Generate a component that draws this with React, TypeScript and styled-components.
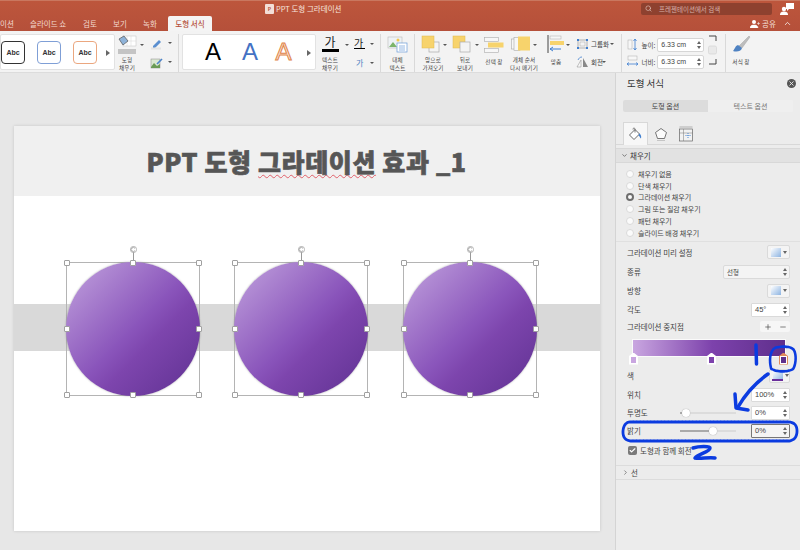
import React from 'react';
import styled, { createGlobalStyle } from 'styled-components';
import { Search, ChevronUp, ChevronDown, ChevronRight, Check, X, Plus, Minus } from 'lucide-react';

const GlobalStyle = createGlobalStyle`
  html, body { margin: 0; padding: 0; overflow: hidden; }
  body { font-family: "Noto Sans CJK KR", "Noto Sans", sans-serif; color: #333; }
  * { box-sizing: border-box; }
`;

const Window = styled.div`
  position: relative;
  width: 800px;
  height: 550px;
  display: flex;
  flex-direction: column;
  overflow: hidden;
  background: #e7e7e7;
`;

const TitleBar = styled.header`
  height: 31px;
  background: linear-gradient(#bd563c, #b5503a);
  border-top: 1px solid #c9775f;
  color: #fff;
  display: flex;
  flex-direction: column;
`;
const TopRow = styled.div`
  height: 15px;
  display: flex;
  align-items: center;
`;
const DocTitle = styled.div`
  margin-left: 265px;
  width: 376px;
  display: flex;
  align-items: center;
  gap: 2px;
  font-size: 7.5px;
  color: #f6e4de;
`;
const DocIcon = styled.span`
  width: 9px;
  height: 10px;
  background: #f3ded7;
  border-radius: 1px;
  color: #b5503a;
  font-size: 5px;
  font-weight: 700;
  text-align: center;
  line-height: 10px;
`;
const SearchBox = styled.div`
  width: 131px;
  height: 12px;
  background: #8e412f;
  border-radius: 2px;
  display: flex;
  align-items: center;
  gap: 7px;
  padding-left: 4px;
  font-size: 6.5px;
  color: #d8b2a7;
`;
const ProfileIcon = styled.svg`
  margin-left: 8px;
`;
const TabRow = styled.div`
  height: 15px;
  display: flex;
  align-items: flex-end;
  position: relative;
`;
const Tab = styled.div<{ $w: number; $active?: boolean }>`
  width: ${p => p.$w}px;
  height: 15px;
  font-size: 7.5px;
  line-height: 15px;
  text-align: ${p => (p.$active ? 'center' : 'left')};
  color: ${p => (p.$active ? '#b5503a' : '#f3d9d0')};
  background: ${p => (p.$active ? '#f4f4f4' : 'transparent')};
  border-radius: 2px 2px 0 0;
  font-weight: ${p => (p.$active ? 500 : 400)};
`;
const ShareArea = styled.div`
  margin-left: auto;
  width: 50px;
  height: 15px;
  display: flex;
  align-items: center;
  font-size: 7.5px;
  color: #f6e4de;
  gap: 1px;
  margin-top: -2px;
`;

const Ribbon = styled.div`
  height: 42px;
  background: #f3f3f3;
  border-bottom: 1px solid #dcdcdc;
  display: flex;
  padding-top: 3px;
`;
const Gallery = styled.div<{ $w: number }>`
  width: ${p => p.$w}px;
  height: 36px;
  flex: none;
  background: #fff;
  border: 1px solid #e2e2e2;
  border-radius: 2px;
  display: flex;
  align-items: center;
  position: relative;
`;
const AbcButton = styled.div<{ $color: string }>`
  width: 24px;
  height: 23px;
  margin-right: 12px;
  border: 1px solid ${p => p.$color};
  border-radius: 4px;
  font-size: 7px;
  font-family: "Liberation Sans", sans-serif;
  font-weight: 700;
  color: #333;
  display: flex;
  align-items: center;
  justify-content: center;
`;
const BigA = styled.div<{ $color: string; $stroke?: string; $w?: number; $ml?: number }>`
  width: ${p => p.$w ?? 37}px;
  margin-left: ${p => p.$ml ?? 0}px;
  text-align: center;
  font-family: "Liberation Sans", sans-serif;
  font-size: 24px;
  line-height: 36px;
  color: ${p => p.$color};
  -webkit-text-stroke: ${p => (p.$stroke ? `1px ${p.$stroke}` : '0')};
`;
const MoreArrow = styled.span`
  width: 0;
  height: 0;
  border-left: 4px solid #666;
  border-top: 3px solid transparent;
  border-bottom: 3px solid transparent;
  position: absolute;
  right: 4px;
  top: 15px;
`;
const Divider = styled.div<{ $l: number; $r: number }>`
  width: 1px;
  height: 38px;
  background: #d9d9d9;
  margin: 0 ${p => p.$r}px 0 ${p => p.$l}px;
  flex: none;
`;
const Tool = styled.div<{ $w: number }>`
  width: ${p => p.$w}px;
  height: 38px;
  flex: none;
  display: flex;
  flex-direction: column;
  align-items: center;
  position: relative;
`;
const ToolIcon = styled.div<{ $pr?: number }>`
  height: 21px;
  padding-right: ${p => p.$pr ?? 0}px;
  display: flex;
  align-items: center;
  justify-content: center;
`;
const TextFillIcon = styled(ToolIcon)`
  flex-direction: column;
  gap: 1px;
`;
const ToolLabel = styled.div<{ $single?: boolean; $pr?: number }>`
  font-size: 5.6px;
  line-height: 8.2px;
  letter-spacing: 0.15px;
  text-align: center;
  color: #444;
  white-space: nowrap;
  padding-right: ${p => p.$pr ?? 0}px;
  margin-top: ${p => (p.$single ? 3 : 1)}px;
`;
const Caret = styled.span<{ $right?: number; $top?: number }>`
  position: absolute;
  right: ${p => p.$right ?? 0}px;
  top: ${p => p.$top ?? 11}px;
  width: 0;
  height: 0;
  border-top: 2.5px solid #555;
  border-left: 2px solid transparent;
  border-right: 2px solid transparent;
`;
const StackTool = styled.div<{ $w: number; $gap?: number; $pl?: number }>`
  width: ${p => p.$w}px;
  height: 38px;
  flex: none;
  padding-left: ${p => p.$pl ?? 0}px;
  display: flex;
  flex-direction: column;
  justify-content: center;
  gap: ${p => p.$gap ?? 5}px;
`;
const MiniRow = styled.div`
  height: 13px;
  display: flex;
  align-items: center;
  gap: 2px;
  font-size: 6.5px;
  color: #444;
  position: relative;
`;
const GaRow = styled(MiniRow)`
  flex-direction: column;
  align-items: flex-start;
  gap: 0;
`;
const BlueGa = styled(MiniRow)`
  padding-left: 2px;
  color: #4f82c2;
  font-size: 8px;
`;
const SizeInput = styled.div`
  width: 47px;
  height: 14px;
  background: #fff;
  border: 1px solid #d6d6d6;
  border-radius: 2px;
  font-size: 7px;
  font-family: "Liberation Sans", sans-serif;
  display: flex;
  align-items: center;
  padding-left: 3px;
  position: relative;
`;
const TextBar = styled.div<{ $w: number; $h: number }>`
  width: ${p => p.$w}px;
  height: ${p => p.$h}px;
  background: #000;
`;
const GaGlyph = styled.div<{ $size: number }>`
  font-size: ${p => p.$size}px;
  line-height: ${p => p.$size}px;
  color: #222;
  text-align: center;
`;

const Body = styled.div`
  flex: 1;
  display: flex;
  min-height: 0;
`;
const Workspace = styled.main`
  width: 615px;
  padding: 53px 15px 0 14px;
  background: #e7e7e7;
`;
const Slide = styled.section`
  position: relative;
  width: 586px;
  height: 405px;
  background: #fff;
  box-shadow: 0 0 3px rgba(0, 0, 0, 0.15);
`;
const SlideHeader = styled.div`
  height: 70px;
  background: #f0f0f0;
  display: flex;
  align-items: center;
  justify-content: center;
  padding-right: 1px;
`;
const SlideTitle = styled.h1`
  margin: 0;
  font-size: 25px;
  line-height: 30px;
  font-weight: 900;
  color: #565656;
  -webkit-text-stroke: 0.7px #565656;
  letter-spacing: 0.6px;
  white-space: nowrap;
`;
const Squiggle = styled.span`
  text-decoration: underline wavy #e0606a 1px;
  text-underline-offset: 2px;
`;
const Band = styled.div`
  position: absolute;
  left: 0;
  right: 0;
  top: 178px;
  height: 47px;
  background: #d9d9d9;
`;
const ShapeBox = styled.div<{ $x: number }>`
  position: absolute;
  left: ${p => p.$x}px;
  top: 136px;
  width: 134px;
  height: 134px;
  border: 1px solid #b4b4b4;
`;
const Circle = styled.div`
  position: absolute;
  inset: -1px;
  border-radius: 50%;
  background: linear-gradient(135deg, #b591d6 12%, #8a55bb 50%, #7d45ad 62%, #653597 92%);
  box-shadow: 0 0 2px rgba(60, 60, 60, 0.45);
`;
const Handle = styled.span<{ $l: number; $t: number }>`
  position: absolute;
  left: calc(${p => p.$l}% - 3px);
  top: calc(${p => p.$t}% - 3px);
  width: 6px;
  height: 6px;
  background: #fff;
  border: 1px solid #a0a0a0;
  border-radius: 1px;
`;
const RotateStem = styled.span`
  position: absolute;
  left: 50%;
  top: -11px;
  width: 1px;
  height: 11px;
  background: #999;
`;
const RotateKnob = styled.svg`
  position: absolute;
  left: calc(50% - 3px);
  top: -17px;
`;

const Panel = styled.aside`
  width: 185px;
  background: #ececec;
  border-left: 1px solid #d4d4d4;
  display: flex;
  flex-direction: column;
  font-size: 7.5px;
  color: #444;
`;
const PanelHeader = styled.div`
  height: 20px;
  padding: 0 4px 0 11px;
  display: flex;
  align-items: center;
  justify-content: space-between;
  font-size: 9.5px;
  color: #333;
`;
const CloseDot = styled.span`
  width: 9px;
  height: 9px;
  border-radius: 50%;
  background: #555;
  color: #ececec;
  display: flex;
  align-items: center;
  justify-content: center;
`;
const Segment = styled.div`
  margin: 7px 7px 0;
  height: 12px;
  display: flex;
  border-radius: 2px;
  overflow: hidden;
  background: #efefef;
`;
const SegmentItem = styled.div<{ $active?: boolean }>`
  flex: 1;
  background: ${p => (p.$active ? '#dcdcdc' : '#efefef')};
  color: ${p => (p.$active ? '#444' : '#777')};
  font-size: 7px;
  line-height: 12px;
  text-align: center;
`;
const IconTabs = styled.div`
  margin-top: 10px;
  height: 23px;
  padding-left: 7px;
  display: flex;
  border-bottom: 1px solid #d8d8d8;
`;
const IconTab = styled.div<{ $active?: boolean }>`
  width: 25px;
  height: 23px;
  display: flex;
  align-items: center;
  justify-content: center;
  background: ${p => (p.$active ? '#f7f7f7' : 'transparent')};
  border: 1px solid ${p => (p.$active ? '#d8d8d8' : 'transparent')};
  border-bottom: none;
`;
const SectionHead = styled.div`
  margin-top: 3px;
  height: 15px;
  background: #e2e2e2;
  border-top: 1px solid #d8d8d8;
  border-bottom: 1px solid #d8d8d8;
  display: flex;
  align-items: center;
  gap: 2px;
  padding-left: 5px;
  font-size: 7.5px;
  color: #333;
`;
const RadioList = styled.div`
  padding: 5px 0 0 10px;
  display: flex;
  flex-direction: column;
  height: 79px;
  border-bottom: 1px solid #e0e0e0;
`;
const RadioRow = styled.div`
  height: 11.8px;
  display: flex;
  align-items: center;
  gap: 4px;
  font-size: 7px;
  color: #444;
`;
const Radio = styled.span<{ $on?: boolean }>`
  width: 8px;
  height: 8px;
  border-radius: 50%;
  background: #fbfbfb;
  border: ${p => (p.$on ? '2.5px solid #6e6e6e' : '1px solid #dadada')};
`;
const FormRow = styled.div<{ $h: number }>`
  height: ${p => p.$h}px;
  padding: 0 10px 0 11px;
  display: flex;
  align-items: center;
  justify-content: space-between;
  flex: none;
  font-size: 7.5px;
`;
const ColorFormRow = styled(FormRow)`
  margin-top: 1px;
`;
const Swatch = styled.div`
  width: 23px;
  height: 14px;
  background: #f4f4f4;
  border: 1px solid #dadada;
  border-radius: 2px;
  display: flex;
  align-items: center;
  gap: 2px;
  padding-left: 3px;
`;
const SwatchFill = styled.span`
  width: 10px;
  height: 9px;
  background: linear-gradient(135deg, #fff, #8db4e2);
`;
const SelectBox = styled.div`
  width: 67px;
  height: 14px;
  background: #f4f4f4;
  border: 1px solid #dadada;
  border-radius: 2px;
  font-size: 6.5px;
  padding-left: 3px;
  line-height: 12px;
  position: relative;
`;
const SpinBox = styled.div<{ $focus?: boolean }>`
  width: 39px;
  height: 14px;
  background: ${p => (p.$focus ? '#f4f4f4' : '#fff')};
  border: ${p => (p.$focus ? '1.5px solid #777' : '1px solid #dadada')};
  border-radius: 1px;
  font-size: 7.5px;
  line-height: 12px;
  padding-left: 3px;
  position: relative;
  font-family: "Liberation Sans", sans-serif;
  flex: none;
`;
const Spinner = styled.span`
  position: absolute;
  right: 2px;
  top: 2px;
  bottom: 2px;
  width: 5px;
  display: flex;
  flex-direction: column;
  justify-content: space-between;
  align-items: center;
`;
const SpinUp = styled.i`
  width: 0;
  height: 0;
  border-bottom: 3px solid #666;
  border-left: 2px solid transparent;
  border-right: 2px solid transparent;
`;
const SpinDown = styled.i`
  width: 0;
  height: 0;
  border-top: 3px solid #666;
  border-left: 2px solid transparent;
  border-right: 2px solid transparent;
`;
const PlusMinus = styled.div`
  width: 30px;
  height: 11px;
  background: #f6f6f6;
  border-radius: 2px;
  display: flex;
  align-items: center;
  justify-content: space-around;
  color: #444;
`;
const StopArea = styled.div`
  position: relative;
  height: 26px;
  margin: 4.5px 14px 0 16px;
  flex: none;
`;
const GradientBar = styled.div`
  height: 18px;
  background: linear-gradient(90deg, #c9a6e0 0%, #7d42ac 52%, #5f2f8c 100%);
  border: 1px solid #fafafa;
`;
const Stop = styled.span<{ $pos: number; $color: string; $sel?: boolean }>`
  position: absolute;
  left: ${p => p.$pos}px;
  top: 14px;
  width: 9px;
  height: 12px;
  background: ${p => (p.$sel ? '#e08a5a' : '#fff')};
  clip-path: polygon(50% 0, 100% 30%, 100% 100%, 0 100%, 0 30%);
  &::after {
    content: '';
    position: absolute;
    left: 1px;
    right: 1px;
    top: 3px;
    bottom: 1px;
    background: ${p => p.$color};
    border: 0.5px solid #fff;
  }
`;
const ColorButton = styled(Swatch)`
  width: 21px;
  position: relative;
`;
const ColorLine = styled.span`
  position: absolute;
  left: 2px;
  bottom: 1px;
  width: 11px;
  height: 2px;
  background: #6b2f9c;
`;
const SliderGroup = styled.div`
  display: flex;
  align-items: center;
  gap: 15px;
`;
const Track = styled.div<{ $fill: number }>`
  position: relative;
  width: 56px;
  height: 2px;
  background: linear-gradient(90deg, #aaa ${p => p.$fill}%, #dcdcdc ${p => p.$fill}%);
`;
const Knob = styled.span<{ $fill: number }>`
  position: absolute;
  left: ${p => p.$fill}%;
  top: -3px;
  width: 8px;
  height: 8px;
  border-radius: 50%;
  background: #fff;
  box-shadow: 0 0 1px #888;
`;
const CheckRow = styled.div`
  height: 26px;
  flex: none;
  padding: 0 0 4px 12px;
  display: flex;
  align-items: center;
  gap: 3px;
  font-size: 7.5px;
  border-bottom: 1px solid #dcdcdc;
`;
const CheckBox = styled.span`
  width: 9px;
  height: 9px;
  background: #7a7a7a;
  border-radius: 2px;
  color: #fff;
  display: flex;
  align-items: center;
  justify-content: center;
`;
const LineSection = styled.div`
  height: 14px;
  flex: none;
  display: flex;
  align-items: center;
  gap: 2px;
  padding-left: 6px;
  font-size: 7.5px;
  border-bottom: 1px solid #dcdcdc;
`;
const Scribbles = styled.svg`
  position: absolute;
  left: 0;
  top: 0;
  pointer-events: none;
`;

const SpinControls = () => (
  <Spinner>
    <SpinUp />
    <SpinDown />
  </Spinner>
);

const FillIcon = () => (
  <svg width="20" height="21" viewBox="0 0 20 21">
    <rect x="6" y="2" width="13" height="10" fill="#fff" stroke="#c9c9c9" strokeWidth="0.6" />
    <path d="M10 2v10M14 2v10M6 7h13" stroke="#d5d5d5" strokeWidth="0.5" />
    <path d="M2 5l5-3 4 5-5 4z" fill="#8fb3d9" stroke="#555" strokeWidth="0.7" />
    <rect x="1" y="15" width="18" height="5" fill="#c4c4c4" />
  </svg>
);
const PenIcon = () => (
  <svg width="13" height="12" viewBox="0 0 13 12">
    <path d="M3 8l6-6 2 2-6 6H3z" fill="#5b8fd0" />
    <rect x="1" y="9.5" width="10" height="2" fill="#e4e4e4" />
  </svg>
);
const EffectIcon = () => (
  <svg width="13" height="12" viewBox="0 0 13 12">
    <rect x="1" y="2" width="9" height="9" fill="#dbe8d2" stroke="#888" strokeWidth="0.5" />
    <path d="M1 10l3-4 3 3 3-2v4H1z" fill="#6a9a55" />
    <path d="M7 7l5-5" stroke="#4b82c8" strokeWidth="1.6" />
  </svg>
);
const AltIcon = () => (
  <svg width="21" height="18" viewBox="0 0 21 18">
    <rect x="1" y="2" width="14" height="11" fill="#eef2f5" stroke="#bbb" strokeWidth="0.6" />
    <path d="M2 12l4-5 4 5z" fill="#7cb46a" />
    <circle cx="11" cy="5" r="1.5" fill="#f2c94c" />
    <rect x="10" y="8" width="10" height="9" fill="#fff" stroke="#6a9bd8" strokeWidth="0.7" />
    <path d="M12 11h6M12 13h6M12 15h6" stroke="#6a9bd8" strokeWidth="0.7" />
  </svg>
);
const LayerIcon = ({ back }: { back?: boolean }) => (
  <svg width="20" height="18" viewBox="0 0 20 18">
    {back ? (
      <>
        <rect x="1" y="1" width="12" height="12" fill="#f7d36c" stroke="#e0b94e" strokeWidth="0.5" />
        <rect x="8" y="7" width="10" height="10" fill="#f4f4f4" stroke="#aaa" strokeWidth="0.7" />
      </>
    ) : (
      <>
        <rect x="8" y="7" width="10" height="10" fill="#f4f4f4" stroke="#aaa" strokeWidth="0.7" />
        <rect x="1" y="1" width="12" height="12" fill="#f7d36c" stroke="#e0b94e" strokeWidth="0.5" />
      </>
    )}
  </svg>
);
const PaneIcon = () => (
  <svg width="20" height="16" viewBox="0 0 20 16">
    <rect x="0.5" y="0.5" width="14" height="4" fill="#f7f7f7" stroke="#aaa" strokeWidth="0.6" />
    <rect x="4" y="5.5" width="15.5" height="5" fill="#f7d36c" />
    <rect x="0.5" y="11.5" width="14" height="4" fill="#f7f7f7" stroke="#aaa" strokeWidth="0.6" />
  </svg>
);
const ReorderIcon = () => (
  <svg width="20" height="16" viewBox="0 0 20 16">
    <rect x="0.5" y="3" width="6" height="10" fill="#f7f7f7" stroke="#aaa" strokeWidth="0.6" />
    <rect x="3" y="1.5" width="6" height="13" fill="#f7f7f7" stroke="#aaa" strokeWidth="0.6" />
    <rect x="7" y="0.5" width="12" height="14" fill="#f7d36c" />
  </svg>
);
const AlignIcon = () => (
  <svg width="18" height="19" viewBox="0 0 18 19">
    <path d="M1 0v18" stroke="#444" strokeWidth="1" />
    <rect x="3" y="1" width="11" height="3" fill="#f7f7f7" stroke="#aaa" strokeWidth="0.5" />
    <rect x="3" y="6" width="14" height="4" fill="#f7d36c" />
    <path d="M3 14h11M3 14l3-2M3 14l3 2" stroke="#3f7fd0" strokeWidth="1" fill="none" />
  </svg>
);
const GroupIcon = () => (
  <svg width="13" height="12" viewBox="0 0 13 12">
    <rect x="2" y="2" width="9" height="8" fill="none" stroke="#888" strokeWidth="0.6" />
    <path d="M4 4h5v4H4z" fill="#f4f4f4" stroke="#aaa" strokeWidth="0.5" />
    <path d="M1 1h2v2H1zM10 1h2v2h-2zM1 9h2v2H1zM10 9h2v2h-2z" fill="#3f7fd0" />
  </svg>
);
const RotateIcon = () => (
  <svg width="13" height="12" viewBox="0 0 13 12">
    <path d="M7 11V2l5 9z" fill="#888" />
    <path d="M1 11l4-7v7z" fill="#f7f7f7" stroke="#888" strokeWidth="0.5" />
    <path d="M2 4c1-2 2-3 4-3" stroke="#3f7fd0" strokeWidth="0.8" fill="none" />
  </svg>
);
const HeightIcon = () => (
  <svg width="11" height="13" viewBox="0 0 11 13">
    <rect x="1" y="2" width="4" height="9" fill="#f7f7f7" stroke="#aaa" strokeWidth="0.5" />
    <path d="M8 1v11M6.5 3L8 1l1.5 2M6.5 10L8 12l1.5-2" stroke="#3f7fd0" strokeWidth="0.8" fill="none" />
  </svg>
);
const WidthIcon = () => (
  <svg width="11" height="13" viewBox="0 0 11 13">
    <rect x="1" y="1" width="9" height="4" fill="#f7f7f7" stroke="#aaa" strokeWidth="0.5" />
    <path d="M0 9h11M2 7.5L0 9l2 1.5M9 7.5L11 9l-2 1.5" stroke="#3f7fd0" strokeWidth="0.8" fill="none" />
  </svg>
);
const LockBracket = () => (
  <svg width="11" height="32" viewBox="0 0 11 32">
    <path d="M2 2h7v5M2 30h7v-5" stroke="#444" strokeWidth="1" fill="none" />
    <rect x="1.5" y="12" width="8" height="8" rx="1.5" fill="#e9e9e9" stroke="#d0d0d0" strokeWidth="0.6" />
  </svg>
);
const BrushIcon = () => (
  <svg width="20" height="19" viewBox="0 0 20 19">
    <path d="M8 11L18 1l1 1-8 11z" fill="#bdbdbd" stroke="#999" strokeWidth="0.4" />
    <path d="M7 10c-3 1-3 4-5 6 3 1 8 1 9-3z" fill="#4f82c2" />
  </svg>
);
const BucketIcon = () => (
  <svg width="15" height="15" viewBox="0 0 15 15">
    <path d="M1.5 8L7 2.5 11.5 7 6 12.5z" fill="#fff" stroke="#444" strokeWidth="0.8" />
    <path d="M5 2.5c0-2 2-2 2 0v3" fill="none" stroke="#444" strokeWidth="0.7" />
    <path d="M11.5 6.5c1.5 1 2 3 1.5 5-1-.5-1-2-2.5-3z" fill="#3f7fd0" />
  </svg>
);
const PentagonIcon = () => (
  <svg width="14" height="15" viewBox="0 0 14 15">
    <path d="M7 1.5l5.5 4-2 6h-7l-2-6z" fill="#fbfbfb" stroke="#555" strokeWidth="0.8" />
    <path d="M3 13.5h8" stroke="#bbb" strokeWidth="0.8" />
  </svg>
);
const SizeTabIcon = () => (
  <svg width="16" height="16" viewBox="0 0 16 16">
    <rect x="1.5" y="3" width="13" height="12" fill="#f2f2f2" stroke="#666" strokeWidth="0.7" />
    <path d="M1.5 1h13M5.5 3v12M1.5 7h13" stroke="#777" strokeWidth="0.5" />
    <path d="M10 7v5M7.5 9.5h5" stroke="#3f7fd0" strokeWidth="0.9" strokeDasharray="1 1" />
  </svg>
);

const handles: [number, number][] = [
  [0, 0], [50, 0], [100, 0], [0, 50], [100, 50], [0, 100], [50, 100], [100, 100],
];

const Shape = ({ x }: { x: number }) => (
  <ShapeBox $x={x}>
    <Circle />
    <RotateStem />
    <RotateKnob width="7" height="7" viewBox="0 0 7 7" fill="none">
      <circle cx="3.5" cy="3.5" r="3.1" fill="#fff" stroke="#8c8c8c" strokeWidth="0.6" />
      <path d="M5 2.4a2 2 0 1 0 0 2.2" stroke="#777" strokeWidth="0.6" />
    </RotateKnob>
    {handles.map(([l, t]) => (
      <Handle key={`${l}-${t}`} $l={l} $t={t} />
    ))}
  </ShapeBox>
);

const fillOptions = ['채우기 없음', '단색 채우기', '그라데이션 채우기', '그림 또는 질감 채우기', '패턴 채우기', '슬라이드 배경 채우기'];

export default function App() {
  return (
    <Window>
      <GlobalStyle />
      <TitleBar>
        <TopRow>
          <DocTitle>
            <DocIcon>P</DocIcon>
            PPT 도형 그라데이션
          </DocTitle>
          <SearchBox>
            <Search size={7} color="#e8cfc8" />
            프레젠테이션에서 검색
          </SearchBox>
          <ProfileIcon width="14" height="12" viewBox="0 0 14 12">
            <path d="M6 0h8v6H9l-2 2V6H6z" fill="#fff" />
            <circle cx="4" cy="6" r="2.2" fill="#fff" />
            <path d="M0 12c0-3 2-3.5 4-3.5S8 9 8 12z" fill="#fff" />
          </ProfileIcon>
        </TopRow>
        <TabRow>
          <Tab $w={30}>이션</Tab>
          <Tab $w={53}>슬라이드 쇼</Tab>
          <Tab $w={30}>검토</Tab>
          <Tab $w={30}>보기</Tab>
          <Tab $w={25}>녹화</Tab>
          <Tab $w={44} $active>도형 서식</Tab>
          <ShareArea>
            <svg width="11" height="8" viewBox="0 0 11 8">
              <circle cx="4" cy="2" r="2" fill="#fff" />
              <path d="M0 8c0-2.5 2-3 4-3s4 .5 4 3zM8.5 2v3M7 3.5h3" fill="#fff" stroke="#fff" strokeWidth="0.5" />
            </svg>
            공유
            <ChevronUp size={9} color="#fff" style={{ marginLeft: 6 }} />
          </ShareArea>
        </TabRow>
      </TitleBar>

      <Ribbon>
        <Gallery $w={115}>
          <AbcButton $color="#333">Abc</AbcButton>
          <AbcButton $color="#7f9fd6">Abc</AbcButton>
          <AbcButton $color="#eba77f">Abc</AbcButton>
          <MoreArrow />
        </Gallery>
        <Tool $w={32}>
          <ToolIcon $pr={8}><FillIcon /></ToolIcon>
          <ToolLabel $pr={8}>도형<br />채우기</ToolLabel>
          <Caret $right={3} $top={10} />
        </Tool>
        <StackTool $w={28} $gap={6} $pl={3}>
          <MiniRow><PenIcon /><Caret $right={3} $top={5} /></MiniRow>
          <MiniRow><EffectIcon /><Caret $right={3} $top={5} /></MiniRow>
        </StackTool>
        <Divider $l={3} $r={3} />
        <Gallery $w={134}>
          <BigA $color="#000" $ml={11.5}>A</BigA>
          <BigA $color="#4472c4">A</BigA>
          <BigA $color="#fbe5d6" $stroke="#e0864a" $w={30}>A</BigA>
          <MoreArrow />
        </Gallery>
        <Tool $w={34}>
          <TextFillIcon $pr={6}>
            <GaGlyph $size={12}>가</GaGlyph>
            <TextBar $w={17} $h={3} />
          </TextFillIcon>
          <ToolLabel $pr={6}>텍스트<br />채우기</ToolLabel>
          <Caret $right={1} $top={10} />
        </Tool>
        <StackTool $w={27} $gap={5} $pl={4}>
          <GaRow>
            <GaGlyph $size={10}>가</GaGlyph>
            <TextBar $w={11} $h={1.5} />
            <Caret $right={3} $top={5} />
          </GaRow>
          <BlueGa>
            가
            <Caret $right={3} $top={6} />
          </BlueGa>
        </StackTool>
        <Divider $l={3} $r={3} />
        <Tool $w={27}>
          <ToolIcon><AltIcon /></ToolIcon>
          <ToolLabel>대체<br />텍스트</ToolLabel>
        </Tool>
        <Divider $l={3} $r={3} />
        <Tool $w={30}>
          <ToolIcon $pr={4}><LayerIcon /></ToolIcon>
          <ToolLabel>앞으로<br />가져오기</ToolLabel>
          <Caret $right={1} $top={10} />
        </Tool>
        <Tool $w={34}>
          <ToolIcon $pr={6}><LayerIcon back /></ToolIcon>
          <ToolLabel>뒤로<br />보내기</ToolLabel>
          <Caret $right={3} $top={10} />
        </Tool>
        <Tool $w={24}>
          <ToolIcon><PaneIcon /></ToolIcon>
          <ToolLabel $single>선택 창</ToolLabel>
        </Tool>
        <Tool $w={36}>
          <ToolIcon $pr={6}><ReorderIcon /></ToolIcon>
          <ToolLabel>개체 순서<br />다시 매기기</ToolLabel>
          <Caret $right={5} $top={10} />
        </Tool>
        <Tool $w={28}>
          <ToolIcon><AlignIcon /></ToolIcon>
          <ToolLabel $single>맞춤</ToolLabel>
          <Caret $right={0} $top={10} />
        </Tool>
        <StackTool $w={46} $gap={5} $pl={6}>
          <MiniRow><GroupIcon />그룹화<Caret $right={2} $top={5} /></MiniRow>
          <MiniRow><RotateIcon />회전<Caret $right={10} $top={5} /></MiniRow>
        </StackTool>
        <Divider $l={5} $r={5} />
        <StackTool $w={80} $gap={4}>
          <MiniRow><HeightIcon />&nbsp;높이:<SizeInput>6.33 cm<SpinControls /></SizeInput></MiniRow>
          <MiniRow><WidthIcon />&nbsp;너비:<SizeInput>6.33 cm<SpinControls /></SizeInput></MiniRow>
        </StackTool>
        <LockBracket />
        <Divider $l={7} $r={1} />
        <Tool $w={28}>
          <ToolIcon><BrushIcon /></ToolIcon>
          <ToolLabel $single>서식 창</ToolLabel>
        </Tool>
      </Ribbon>

      <Body>
        <Workspace>
          <Slide>
            <SlideHeader>
              <SlideTitle>PPT 도형 <Squiggle>그라데이션</Squiggle> 효과 _1</SlideTitle>
            </SlideHeader>
            <Band />
            <Shape x={52} />
            <Shape x={220} />
            <Shape x={389} />
          </Slide>
        </Workspace>

        <Panel>
          <PanelHeader>
            도형 서식
            <CloseDot><X size={7} strokeWidth={3} /></CloseDot>
          </PanelHeader>
          <Segment>
            <SegmentItem $active>도형 옵션</SegmentItem>
            <SegmentItem>텍스트 옵션</SegmentItem>
          </Segment>
          <IconTabs>
            <IconTab $active><BucketIcon /></IconTab>
            <IconTab><PentagonIcon /></IconTab>
            <IconTab><SizeTabIcon /></IconTab>
          </IconTabs>
          <SectionHead>
            <ChevronDown size={7} />
            채우기
          </SectionHead>
          <RadioList>
            {fillOptions.map((o, i) => (
              <RadioRow key={o}>
                <Radio $on={i === 2} />
                {o}
              </RadioRow>
            ))}
          </RadioList>
          <FormRow $h={20}>
            그라데이션 미리 설정
            <Swatch><SwatchFill /><SpinDown /></Swatch>
          </FormRow>
          <FormRow $h={19}>
            종류
            <SelectBox>선형<SpinControls /></SelectBox>
          </FormRow>
          <FormRow $h={19}>
            방향
            <Swatch><SwatchFill /><SpinDown /></Swatch>
          </FormRow>
          <FormRow $h={19}>
            각도
            <SpinBox>45°<SpinControls /></SpinBox>
          </FormRow>
          <FormRow $h={15}>
            그라데이션 중지점
            <PlusMinus><Plus size={8} /><Minus size={8} /></PlusMinus>
          </FormRow>
          <StopArea>
            <GradientBar />
            <Stop $pos={-3} $color="#c9a6e0" />
            <Stop $pos={75} $color="#7d42ac" />
            <Stop $pos={147} $color="#5f2f8c" $sel />
          </StopArea>
          <ColorFormRow $h={20}>
            색
            <ColorButton><SwatchFill /><SpinDown /><ColorLine /></ColorButton>
          </ColorFormRow>
          <FormRow $h={18}>
            위치
            <SpinBox>100%<SpinControls /></SpinBox>
          </FormRow>
          <FormRow $h={18}>
            투명도
            <SliderGroup>
              <Track $fill={3}><Knob $fill={3} /></Track>
              <SpinBox>0%<SpinControls /></SpinBox>
            </SliderGroup>
          </FormRow>
          <FormRow $h={18}>
            밝기
            <SliderGroup>
              <Track $fill={52}><Knob $fill={52} /></Track>
              <SpinBox $focus>0%<SpinControls /></SpinBox>
            </SliderGroup>
          </FormRow>
          <CheckRow>
            <CheckBox><Check size={7} strokeWidth={4} /></CheckBox>
            도형과 함께 회전
          </CheckRow>
          <LineSection>
            <ChevronRight size={7} />
            선
          </LineSection>
        </Panel>
      </Body>

      <Scribbles width="800" height="550" viewBox="0 0 800 550" fill="none" stroke="#0b3be0" strokeLinecap="round" strokeLinejoin="round">
        <path d="M756 345l.5 19" strokeWidth="3.5" />
        <path d="M771 368c-2-8-1-17 4-20 5-2 14-2 18 1 4 4 3 16 0 20-4 3-15 3-19 1-2-1-3-1-3-2z" strokeWidth="2.6" strokeDasharray="3 .5" />
        <path d="M768 374c-10 7-22 19-30 33" strokeWidth="3.5" />
        <path d="M735 394l1 14 12 2" strokeWidth="3.5" />
        <path d="M630 422h158c6 0 9 3 9 9s-3 10-9 10H632c-6 0-9-3-9-9s3-10 7-10z" strokeWidth="2.8" strokeDasharray="3 .5" />
        <path d="M693 448c6-2 17-2 17 0 0 4-12 6-15 10 5 1 14-1 20 0" strokeWidth="3.5" />
      </Scribbles>
    </Window>
  );
}
